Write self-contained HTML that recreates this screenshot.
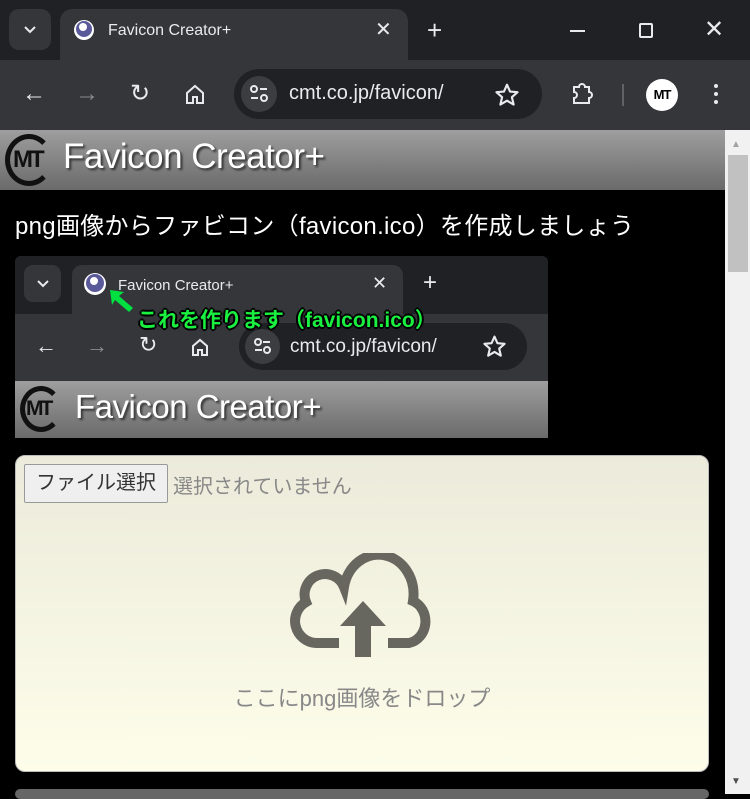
<!DOCTYPE html>
<html><head><meta charset="utf-8"><style>
*{margin:0;padding:0;box-sizing:border-box}
body{width:750px;height:794px;overflow:hidden;background:#000;font-family:"Liberation Sans","Noto Sans CJK JP",sans-serif;position:relative}
.a{position:absolute}
</style></head><body>
<!-- chrome top -->
<div class="a" style="left:0;top:0;width:750px;height:60px;background:#202124"></div>
<div class="a" style="left:9px;top:9px;width:42px;height:41px;border-radius:10px;background:#35363a"></div>
<svg class="a" style="left:22px;top:24px" width="16" height="12"><path d="M3 3l5 5 5-5" stroke="#e8eaed" stroke-width="2" fill="none"/></svg>
<div class="a" style="left:60px;top:9px;width:348px;height:55px;border-radius:12px 12px 0 0;background:#35363a"></div>
<svg class="a" style="left:73px;top:19px" width="22" height="22"><circle cx="11" cy="11" r="10" fill="#fff"/><circle cx="11" cy="10" r="8" fill="#5a5a9a"/><circle cx="10" cy="8" r="4" fill="#fff"/></svg>
<div class="a" style="left:108px;top:22px;color:#e8eaed;font-size:16px">Favicon Creator+</div>
<div class="a" style="left:375px;top:17px;color:#e8eaed;font-size:20px">✕</div>
<div class="a" style="left:427px;top:15px;color:#e8eaed;font-size:26px;font-weight:300">+</div>
<div class="a" style="left:570px;top:30px;width:15px;height:2px;background:#e8eaed"></div>
<div class="a" style="left:639px;top:23px;width:14px;height:15px;border:2px solid #e8eaed;border-radius:2px"></div>
<div class="a" style="left:704px;top:15px;color:#e8eaed;font-size:24px">✕</div>
<div class="a" style="left:0;top:60px;width:750px;height:70px;background:#35363a"></div>
<div class="a" style="left:22px;top:80px;color:#e8eaed;font-size:24px">←</div>
<div class="a" style="left:75px;top:80px;color:#8a8b8e;font-size:24px">→</div>
<div class="a" style="left:130px;top:79px;color:#e8eaed;font-size:24px">↻</div>
<svg class="a" style="left:184px;top:83px" width="22" height="22"><path d="M3 10L11 3l8 7v10h-6v-6h-4v6H3z" stroke="#e8eaed" stroke-width="2" fill="none"/></svg>
<div class="a" style="left:234px;top:69px;width:308px;height:50px;border-radius:25px;background:#202124"></div>
<div class="a" style="left:241px;top:76px;width:36px;height:36px;border-radius:18px;background:#3c3d41"></div>
<svg class="a" style="left:249px;top:84px" width="20" height="20"><circle cx="5" cy="5" r="3" stroke="#e8eaed" stroke-width="2" fill="none"/><path d="M11 5h7M2 14h7" stroke="#e8eaed" stroke-width="2"/><circle cx="15" cy="14" r="3" stroke="#e8eaed" stroke-width="2" fill="none"/></svg>
<div class="a" style="left:289px;top:82px;color:#e8eaed;font-size:20px">cmt.co.jp/favicon/</div>
<svg class="a" style="left:494px;top:82px" width="26" height="26" viewBox="0 0 24 24"><path d="M12 2.5l2.8 6.3 6.9.6-5.2 4.6 1.6 6.8L12 17.2 5.9 20.8l1.6-6.8L2.3 9.4l6.9-.6z" stroke="#e8eaed" stroke-width="2" fill="none" stroke-linejoin="round"/></svg>
<svg class="a" style="left:569px;top:81px" width="26" height="26"><path d="M5 6h5a3 3 0 0 1 6 0h4v5a3 3 0 0 1 0 6v5H5v-5a3 3 0 0 0 0-6z" stroke="#e8eaed" stroke-width="2" fill="none"/></svg>
<div class="a" style="left:622px;top:84px;width:2px;height:22px;background:#5f6368"></div>
<div class="a" style="left:646px;top:79px;width:32px;height:32px;border-radius:16px;background:#fff;color:#000;font-size:13px;font-weight:bold;text-align:center;line-height:32px;letter-spacing:-1px">MT</div>
<div class="a" style="left:714px;top:84px;width:4px;height:4px;border-radius:2px;background:#e8eaed;box-shadow:0 8px #e8eaed,0 16px #e8eaed"></div>
<!-- scrollbar -->
<div class="a" style="left:725px;top:130px;width:25px;height:664px;background:#f1f1f1"></div>
<div class="a" style="left:728px;top:155px;width:20px;height:117px;background:#c1c1c1"></div>
<div class="a" style="left:731px;top:139px;color:#a3a3a3;font-size:10px">▲</div>
<div class="a" style="left:731px;top:776px;color:#505050;font-size:10px">▼</div>
<!-- header -->
<div class="a" style="left:0;top:130px;width:725px;height:60px;background:linear-gradient(#9e9e9e,#6a6a6a)"></div>
<div class="a" style="left:5px;top:134px;width:48px;height:52px;border:5px solid #111;border-right-color:transparent;border-radius:50%"></div>
<div class="a" style="left:13px;top:146px;color:#111;font-size:24px;font-weight:bold;letter-spacing:-3px">MT</div>
<div class="a" style="left:63px;top:137px;color:#fff;font-size:35px;text-shadow:2px 2px 2px #333;letter-spacing:-0.5px">Favicon Creator+</div>
<div class="a" style="left:15px;top:206px;color:#fff;font-size:24px;letter-spacing:0.3px">png画像からファビコン（favicon.ico）を作成しましょう</div>
<!-- screenshot image -->
<div class="a" style="left:15px;top:256px;width:533px;height:182px;background:#35363a;border-radius:6px 6px 0 0;overflow:hidden">
<div class="a" style="left:0;top:0;width:533px;height:58px;background:#202124"></div>
<div class="a" style="left:9px;top:9px;width:37px;height:37px;border-radius:9px;background:#35363a"></div>
<svg class="a" style="left:21px;top:23px" width="14" height="10"><path d="M2 2l5 5 5-5" stroke="#e8eaed" stroke-width="2" fill="none"/></svg>
<div class="a" style="left:57px;top:9px;width:331px;height:55px;border-radius:10px 10px 0 0;background:#35363a"></div>
<svg class="a" style="left:68px;top:16px" width="24" height="24"><circle cx="12" cy="12" r="11" fill="#fff"/><circle cx="12" cy="11" r="9" fill="#5a5a9a"/><circle cx="11" cy="9" r="4" fill="#fff"/></svg>
<div class="a" style="left:103px;top:21px;color:#e8eaed;font-size:15px">Favicon Creator+</div>
<div class="a" style="left:357px;top:17px;color:#e8eaed;font-size:18px">✕</div>
<div class="a" style="left:408px;top:13px;color:#e8eaed;font-size:24px">+</div>
<div class="a" style="left:20px;top:77px;color:#e8eaed;font-size:22px">←</div>
<div class="a" style="left:71px;top:77px;color:#8a8b8e;font-size:22px">→</div>
<div class="a" style="left:124px;top:76px;color:#e8eaed;font-size:22px">↻</div>
<svg class="a" style="left:175px;top:81px" width="20" height="20"><path d="M3 9L10 3l7 6v9h-5v-5h-4v5H3z" stroke="#e8eaed" stroke-width="2" fill="none"/></svg>
<div class="a" style="left:224px;top:67px;width:288px;height:47px;border-radius:24px;background:#202124"></div>
<div class="a" style="left:230px;top:73px;width:35px;height:35px;border-radius:18px;background:#3c3d41"></div>
<svg class="a" style="left:238px;top:81px" width="19" height="19"><circle cx="5" cy="5" r="3" stroke="#e8eaed" stroke-width="2" fill="none"/><path d="M10 5h7M2 13h7" stroke="#e8eaed" stroke-width="2"/><circle cx="14" cy="13" r="3" stroke="#e8eaed" stroke-width="2" fill="none"/></svg>
<div class="a" style="left:275px;top:80px;color:#e8eaed;font-size:19px">cmt.co.jp/favicon/</div>
<svg class="a" style="left:467px;top:78px" width="25" height="25" viewBox="0 0 24 24"><path d="M12 2.5l2.8 6.3 6.9.6-5.2 4.6 1.6 6.8L12 17.2 5.9 20.8l1.6-6.8L2.3 9.4l6.9-.6z" stroke="#e8eaed" stroke-width="2" fill="none" stroke-linejoin="round"/></svg>
<div class="a" style="left:0;top:125px;width:533px;height:57px;background:linear-gradient(#9e9e9e,#6a6a6a)"></div>
<div class="a" style="left:5px;top:130px;width:42px;height:46px;border:5px solid #111;border-right-color:transparent;border-radius:50%"></div>
<div class="a" style="left:11px;top:141px;color:#111;font-size:21px;font-weight:bold;letter-spacing:-3px">MT</div>
<div class="a" style="left:60px;top:132px;color:#fff;font-size:33px;text-shadow:2px 2px 2px #333;letter-spacing:-0.5px">Favicon Creator+</div>
<svg class="a" style="left:92px;top:32px" width="40" height="30"><path d="M3 2l14 2-5 4 14 12-4 4-14-12-3 5z" fill="#00e040"/></svg>
<div class="a" style="left:122px;top:48px;color:#19f040;font-size:21px;font-weight:bold;text-shadow:1px 1px 0 #000,-1px -1px 0 #000,1px -1px 0 #000,-1px 1px 0 #000,2px 0 0 #000,-2px 0 0 #000,0 2px 0 #000,0 -2px 0 #000">これを作ります（favicon.ico）</div>
</div>
<!-- drop zone -->
<div class="a" style="left:15px;top:455px;width:694px;height:317px;border-radius:10px;background:linear-gradient(#ecebdb,#fdfdea);border:1px solid #bbb"></div>
<div class="a" style="left:24px;top:464px;width:144px;height:39px;border:1px solid #999;border-radius:2px;background:#efefef;color:#333;font-size:20px;line-height:36px;text-align:center">ファイル選択</div>
<div class="a" style="left:173px;top:470px;color:#888;font-size:20px">選択されていません</div>
<svg class="a" style="left:289px;top:553px" width="148" height="106" viewBox="0 0 148 106"><path d="M50 90H27A22 22 0 0 1 17 49 16 16 0 0 1 55 34 33 37 0 0 1 124 48 20 22 0 0 1 120 90H99" stroke="#676760" stroke-width="10" fill="none"/><path d="M51 73L74 48 97 73H82V104H66V73z" fill="#676760"/></svg>
<div class="a" style="left:15px;top:681px;width:694px;text-align:center;color:#888;font-size:22px">ここにpng画像をドロップ</div>
<div class="a" style="left:15px;top:789px;width:694px;height:10px;border-radius:6px;background:#666"></div>
</body></html>
